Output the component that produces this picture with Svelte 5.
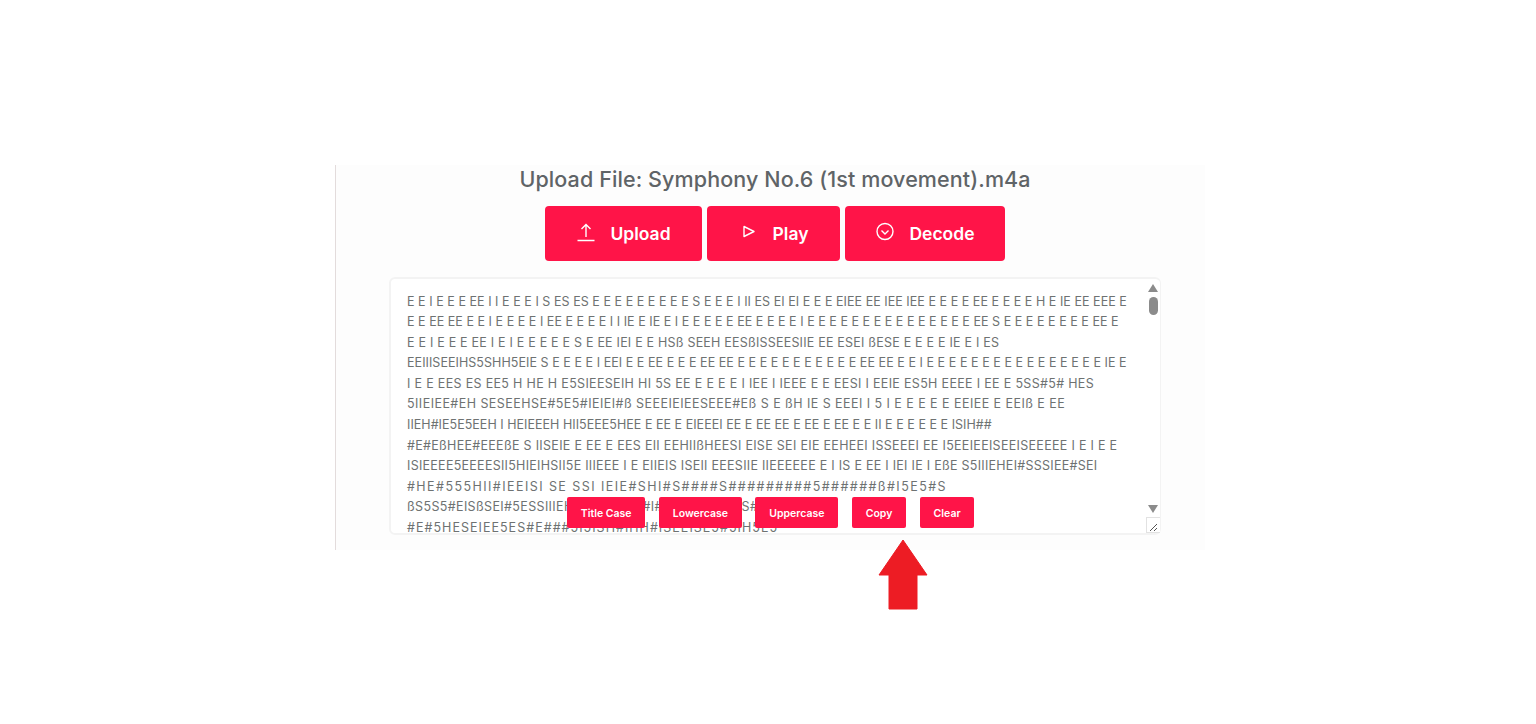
<script>
  // each line keeps its own tracking, the S, H, 5 and # glyphs run wider in the original face
  const lines = [
    ['E E I E E E EE I I E E E I S ES ES E E E E E E E E E S E E E I II ES EI EI E E E EIEE EE IEE IEE E E E E EE E E E E H E IE EE EEE E', 0.04],
    ['E E EE EE E E I E E E E I EE E E E E I I IE E IE E I E E E E E EE E E E E I E E E E E E E E E E E E E E E EE S E E E E E E E E EE E', 0.03],
    ['E E I E E E EE I E I E E E E E S E EE IEI E E HSß SEEH EESßISSEESIIE EE ESEI ßESE E E E E IE E I ES', 0.21],
    ['EEIIISEEIHS5SHH5EIE S E E E E I EEI E E EE E E E EE EE E E E E E E E E E E E EE EE E E I E E E E E E E E E E E E E E E E IE E', 0.05],
    ['I E E EES ES EE5 H HE H E5SIEESEIH HI 5S EE E E E E I IEE I IEEE E E EESI I EEIE ES5H EEEE I EE E 5SS#5# HES', 0.32],
    ['5IIEIEE#EH SESEEHSE#5E5#IEIEI#ß SEEEIEIEESEEE#Eß S E ßH IE S EEEI I 5 I E E E E E EEIEE E EEIß E EE', 0.45],
    ['IIEH#IE5E5EEH I HEIEEEH HII5EEE5HEE E EE E EIEEEI EE E EE EE E EE E EE E E II E E E E E E ISIH##', 0.03],
    ['#E#EßHEE#EEEßE S IISEIE E EE E EES EII EEHIIßHEESI EISE SEI EIE EEHEEI ISSEEEI EE I5EEIEEISEEISEEEEE I E I E E', 0.3],
    ['ISIEEEE5EEEESII5HIEIHSII5E IIIEEE I E EIIEIS ISEII EEESIIE IIEEEEEE E I IS E EE I IEI IE I EßE S5IIIEHEI#SSSIEE#SEI', 0.27],
    ['#HE#555HII#IEEISI SE SSI IEIE#SHI#S####S#########5######ß#I5E5#S', 1.44],
    ['ßS5S5#EISßSEI#5ESSIIIEHSIE#5E#S##I#ISHES#SE#ES#', 0.36],
    ['#E#5HESEIEE5ES#E###5I5ISH#IHH#ISEEISE5#5IH5E5', 1.03]
  ];
  const tools = ['Title Case', 'Lowercase', 'Uppercase', 'Copy', 'Clear'];
</script>

<main class="page">
  <section class="panel">
    <h1>Upload File: Symphony No.6 (1st movement).m4a</h1>

    <div class="actions">
      <button class="action upload">
        <svg width="20" height="20" viewBox="0 0 20 20" fill="none" stroke="currentColor" stroke-width="1.4">
          <path d="M1.5 18.5h17M10 15V2.5M5.5 7L10 2.5 14.500 7" />
        </svg>
        Upload
      </button>
      <button class="action play">
        <svg width="20" height="20" viewBox="0 0 20 20" fill="none" stroke="currentColor" stroke-width="1.4">
          <path d="M5 4.500v10l10-5z" stroke-linejoin="round" />
        </svg>
        Play
      </button>
      <button class="action decode">
        <svg width="20" height="20" viewBox="0 0 20 20" fill="none" stroke="currentColor" stroke-width="1.4">
          <circle cx="10" cy="9.500" r="8" />
          <path d="M6.500 8.500L10 12l3.500-3.500" />
        </svg>
        Decode
      </button>
    </div>

    <div class="output">
      <div class="text">
        {#each lines as [line, track]}
          <div class="line" style="letter-spacing: {track}px">{line}</div>
        {/each}
      </div>

      <div class="scrollbar">
        <span class="arrow-up"></span>
        <span class="thumb"></span>
        <span class="arrow-down"></span>
      </div>

      <div class="grip">
        <svg width="9" height="9" viewBox="0 0 9 9" fill="none" stroke="#555" stroke-width="1">
          <path d="M1 8l7-7M5 8l3-3" />
        </svg>
      </div>

      <div class="tools">
        {#each tools as tool}
          <button class="tool">{tool}</button>
        {/each}
      </div>

      <svg class="pointer" width="50" height="71" viewBox="0 0 50 71">
        <path d="M25 1L49 36H39V70H11V36H1z" fill="#ed1c24" stroke="#ed1c24" stroke-width="1" stroke-linejoin="round" />
      </svg>
    </div>
  </section>
</main>

<style>
  :global(body) {
    margin: 0;
    background: #fff;
  }

  .page {
    height: 724px;
    padding-top: 165px;
    box-sizing: border-box;
    font-family: Inter, "Open Sans", sans-serif;
  }

  .panel {
    width: 870px;
    height: 385px;
    margin-left: 335px;
    padding: 0 44px 0 53px;
    box-sizing: border-box;
    border-left: 1px solid #e3dcdc;
    background: #fdfdfd;
  }

  h1 {
    margin: 0;
    height: 41px;
    font-size: 21.5px;
    font-weight: 500;
    line-height: 28px;
    letter-spacing: 0.1px;
    text-align: center;
    color: #5f6467;
  }

  .actions {
    display: flex;
    justify-content: center;
    gap: 5px;
  }

  .action {
    display: flex;
    align-items: center;
    justify-content: center;
    gap: 14px;
    height: 55px;
    border: none;
    border-radius: 4px;
    background: #ff1448;
    color: #fff;
    font: 600 17.5px Inter, sans-serif;
  }

  .action svg {
    margin-top: -3px;
  }

  .upload { width: 157px; }
  .play { width: 133px; }
  .decode { width: 160px; }

  .output {
    position: relative;
    height: 258px;
    margin-top: 16px;
    border: 2px solid #f3f3f3;
    border-right-width: 1px;
    border-radius: 6px;
    box-sizing: border-box;
    background: #fff;
  }

  .text {
    height: 100%;
    padding: 12.500px 0 0 16px;
    box-sizing: border-box;
    overflow: hidden;
    font-size: 12.500px;
    line-height: 20.600px;
    color: #6e7272;
  }

  .line {
    white-space: nowrap;
  }

  .scrollbar {
    position: absolute;
    top: 4px;
    right: 0;
    bottom: 19px;
    width: 13px;
    background: #fff;
  }

  .thumb {
    position: absolute;
    top: 14px;
    left: 2px;
    width: 9px;
    height: 18px;
    border-radius: 5px;
    background: #8b8b8b;
  }

  .arrow-up,
  .arrow-down {
    position: absolute;
    left: 1px;
    width: 0;
    height: 0;
    border-left: 5.500px solid transparent;
    border-right: 5.500px solid transparent;
  }

  .arrow-up {
    top: 1px;
    border-bottom: 8px solid #8b8b8b;
  }

  .arrow-down {
    bottom: 1px;
    border-top: 8px solid #8b8b8b;
  }

  .grip {
    position: absolute;
    right: 0;
    bottom: 0;
    display: flex;
    align-items: flex-end;
    justify-content: center;
    width: 14px;
    height: 16px;
    border: 1px solid #e2e2e2;
    border-right: none;
    box-sizing: border-box;
    background: #fff;
  }

  .tools {
    position: absolute;
    top: 218px;
    left: 176px;
    display: flex;
    gap: 13.750px;
  }

  .tool {
    height: 31px;
    padding: 1px 13.750px 0;
    border: none;
    border-radius: 2px;
    background: #ff1448;
    color: #fff;
    font: 600 10.500px Inter, sans-serif;
    white-space: nowrap;
  }

  .pointer {
    position: absolute;
    top: 260px;
    left: 487px;
  }
</style>
